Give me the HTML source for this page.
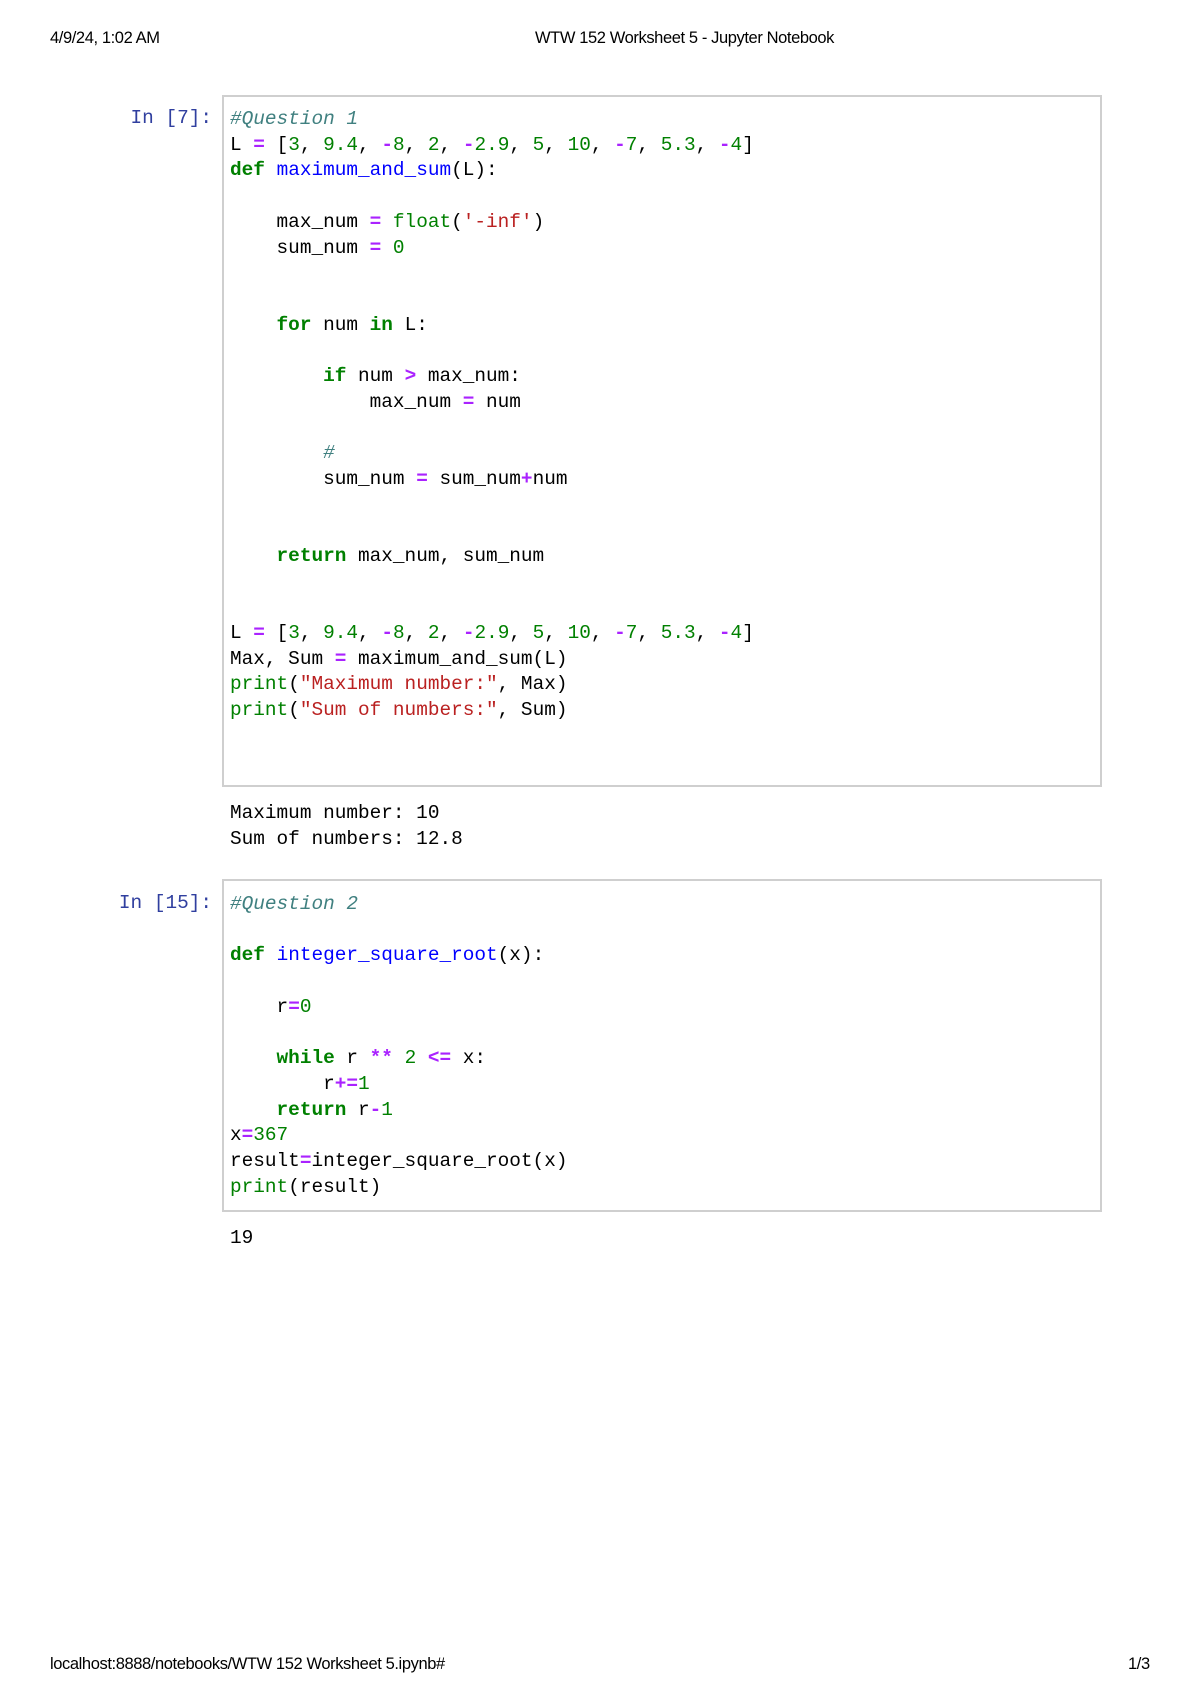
<!DOCTYPE html>
<html><head><meta charset="utf-8"><style>
body{margin:0;width:1200px;height:1698px;background:#fff;position:relative;font-family:"Liberation Sans",sans-serif;overflow:hidden}
.h{position:absolute;font-size:16.5px;color:#000;letter-spacing:-0.4px}
pre{margin:0;font-family:"Liberation Mono",monospace;font-size:19.4px;line-height:25.7px;position:absolute;color:#000}
.box{position:absolute;border:2px solid #cfcfcf;background:#fff}
.p{position:absolute;font-family:"Liberation Mono",monospace;font-size:19.4px;color:#303f9f;text-align:right}
.k{color:#008000;font-weight:bold}.f{color:#0000ff}.o{color:#aa22ff;font-weight:bold}.n{color:#008000}.s{color:#ba2121}.c{color:#408080;font-style:italic}.b{color:#008000}
</style></head><body>
<div class="h" style="left:50px;top:29px">4/9/24, 1:02 AM</div>
<div class="h" style="left:535px;top:29px">WTW 152 Worksheet 5 - Jupyter Notebook</div>
<div class="box" style="left:222px;top:95px;width:876px;height:688px"></div>
<div class="p" style="left:100px;top:107px;width:112px">In [7]:</div>
<pre style="left:230px;top:107px"><span class="c">#Question 1</span>
L <span class="o">=</span> [<span class="n">3</span>, <span class="n">9.4</span>, <span class="o">-</span><span class="n">8</span>, <span class="n">2</span>, <span class="o">-</span><span class="n">2.9</span>, <span class="n">5</span>, <span class="n">10</span>, <span class="o">-</span><span class="n">7</span>, <span class="n">5.3</span>, <span class="o">-</span><span class="n">4</span>]
<span class="k">def</span> <span class="f">maximum_and_sum</span>(L):

    max_num <span class="o">=</span> <span class="b">float</span>(<span class="s">'-inf'</span>)
    sum_num <span class="o">=</span> <span class="n">0</span>


    <span class="k">for</span> num <span class="k">in</span> L:

        <span class="k">if</span> num <span class="o">&gt;</span> max_num:
            max_num <span class="o">=</span> num

        <span class="c">#</span>
        sum_num <span class="o">=</span> sum_num<span class="o">+</span>num


    <span class="k">return</span> max_num, sum_num


L <span class="o">=</span> [<span class="n">3</span>, <span class="n">9.4</span>, <span class="o">-</span><span class="n">8</span>, <span class="n">2</span>, <span class="o">-</span><span class="n">2.9</span>, <span class="n">5</span>, <span class="n">10</span>, <span class="o">-</span><span class="n">7</span>, <span class="n">5.3</span>, <span class="o">-</span><span class="n">4</span>]
Max, Sum <span class="o">=</span> maximum_and_sum(L)
<span class="b">print</span>(<span class="s">"Maximum number:"</span>, Max)
<span class="b">print</span>(<span class="s">"Sum of numbers:"</span>, Sum)</pre>
<pre style="left:230px;top:801px">Maximum number: 10
Sum of numbers: 12.8</pre>
<div class="box" style="left:222px;top:879px;width:876px;height:329px"></div>
<div class="p" style="left:90px;top:892px;width:122px">In [15]:</div>
<pre style="left:230px;top:892px"><span class="c">#Question 2</span>

<span class="k">def</span> <span class="f">integer_square_root</span>(x):

    r<span class="o">=</span><span class="n">0</span>

    <span class="k">while</span> r <span class="o">**</span> <span class="n">2</span> <span class="o">&lt;=</span> x:
        r<span class="o">+=</span><span class="n">1</span>
    <span class="k">return</span> r<span class="o">-</span><span class="n">1</span>
x<span class="o">=</span><span class="n">367</span>
result<span class="o">=</span>integer_square_root(x)
<span class="b">print</span>(result)</pre>
<pre style="left:230px;top:1226px">19</pre>
<div class="h" style="left:50px;top:1655px">localhost:8888/notebooks/WTW 152 Worksheet 5.ipynb#</div>
<div class="h" style="left:1128px;top:1655px">1/3</div>
</body></html>
